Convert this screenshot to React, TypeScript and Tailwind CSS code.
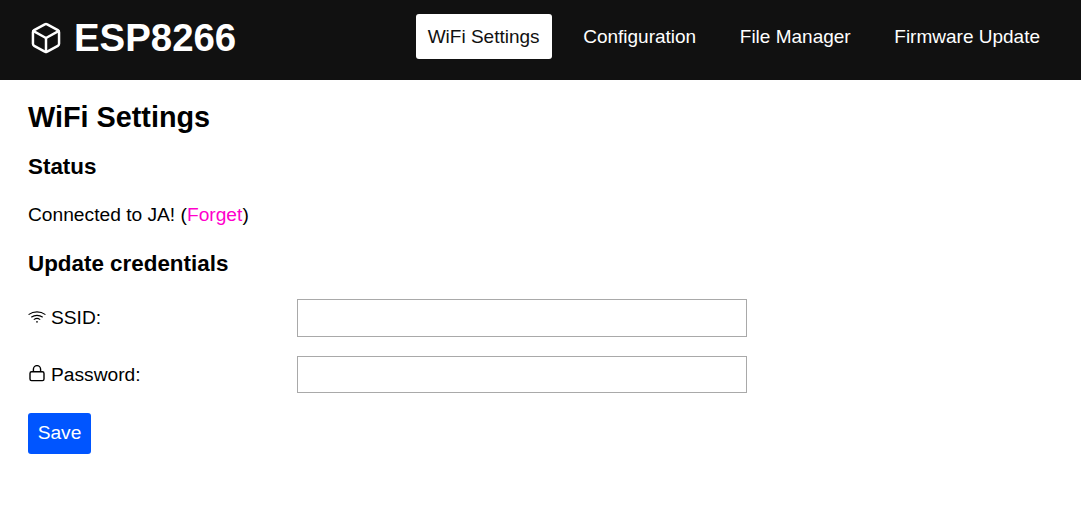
const navItems = ["WiFi Settings", "Configuration", "File Manager", "Firmware Update"];

const BoxIcon = () => (
  <svg width="36" height="36" viewBox="0 0 24 24" fill="none" stroke="currentColor" strokeWidth="1.65" strokeLinecap="round" strokeLinejoin="round">
    <path d="M11.2 2.9Q12 2.5 12.8 2.9L19.9 6.8Q20.7 7.25 20.7 8.1V15.9Q20.7 16.75 19.9 17.2L12.8 21.1Q12 21.5 11.2 21.1L4.1 17.2Q3.3 16.75 3.3 15.9V8.1Q3.3 7.25 4.1 6.8z" />
    <path d="M3.7 7.4L12 12l8.3-4.6" />
    <path d="M12 12v9.4" />
  </svg>
);

const WifiIcon = () => (
  <svg width="18" height="18" viewBox="0 0 18 18" fill="none" stroke="currentColor" strokeWidth="1.1" strokeLinecap="round">
    <path d="M1 5.4C5.4 2 12.6 2 17 5.4" />
    <path d="M3.6 8C6.6 5.8 11.4 5.8 14.4 8" />
    <path d="M6.2 10.4C7.8 9.2 10.2 9.2 11.8 10.4" />
    <circle cx="9" cy="12.8" r="0.85" fill="currentColor" stroke="none" />
  </svg>
);

const LockIcon = () => (
  <svg width="18" height="18" viewBox="0 0 18 18" fill="none" stroke="currentColor" strokeWidth="1.4" strokeLinejoin="round">
    <rect x="2" y="6.8" width="14" height="8.8" rx="1.6" />
    <path d="M5.4 6.8V4.2a3.6 3.6 0 0 1 7.2 0v2.6" />
  </svg>
);

const Field = ({ icon, label, type, height, labelClass }: { icon: React.ReactNode; label: string; type: string; height: string; labelClass: string }) => (
  <div className="flex items-center">
    <label className="flex w-[269px] items-center gap-[5px] text-[19.2px]">
      {icon}
      <span className={labelClass}>{label}</span>
    </label>
    <input type={type} className={`${height} w-[450px] border border-[#a9a9a9] bg-white outline-none`} />
  </div>
);

export default function App() {
  return (
    <div className="min-h-[510px] bg-white text-black font-['Liberation_Sans',Arial,sans-serif]">
      <header className="flex h-[80px] items-center justify-between bg-[#111111] pl-[28px] pr-[29px] text-white">
        <div className="flex items-center gap-[10px] pb-[5px]">
          <BoxIcon />
          <span className="text-[38.4px] font-bold leading-[44px]">ESP8266</span>
        </div>
        <nav className="flex items-center gap-[19.6px] pb-[7px]">
          {navItems.map((item, index) => (
            <a
              key={item}
              className={`rounded-[3px] px-[12px] py-[12px] text-[19px] leading-[21px] ${index === 0 ? "bg-white text-[#111111]" : "text-white"}`}
            >
              {item}
            </a>
          ))}
        </nav>
      </header>

      <main className="px-[28px]">
        <h1 className="mt-[21px] text-[28.8px] font-bold leading-[32px]">WiFi Settings</h1>
        <h2 className="mt-[21px] text-[22.4px] font-bold leading-[25px]">Status</h2>
        <p className="mt-[25px] text-[19.2px] leading-[21px]">
          Connected to JA! (<a className="text-[#ff00cc]">Forget</a>)
        </p>
        <h2 className="mt-[26px] text-[22.4px] font-bold leading-[25px]">Update credentials</h2>
        <div className="mt-[23px] flex flex-col gap-[19px]">
          <Field icon={<WifiIcon />} label="SSID:" type="text" height="h-[38px]" labelClass="" />
          <Field icon={<LockIcon />} label="Password:" type="password" height="h-[37px]" labelClass="pt-[2px]" />
        </div>
        <button className="mt-[20px] h-[41px] w-[63px] rounded-[3px] bg-[#0055ff] pb-[1px] text-[19.2px] text-white">Save</button>
      </main>
    </div>
  );
}
